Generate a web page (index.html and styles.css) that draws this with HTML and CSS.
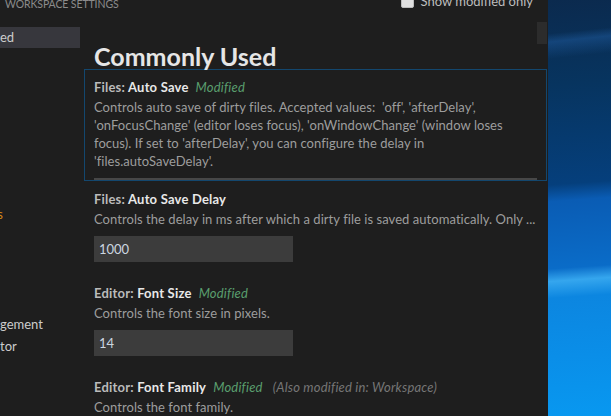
FILE: index.html
```html
<!DOCTYPE html>
<html lang="en">
<head>
<meta charset="utf-8">
<title>Workspace Settings</title>
<link rel="stylesheet" href="styles.css">
</head>
<body>
<div class="window">
  <header class="topbar">
    <span class="scope">WORKSPACE SETTINGS</span>
    <label class="filter"><span class="checkbox"></span>Show modified only</label>
  </header>
  <div class="panes">
    <nav class="tree">
      <div class="tree-item selected">ed</div>
      <div class="tree-item"></div>
      <div class="tree-item"></div>
      <div class="tree-item"></div>
      <div class="tree-item"></div>
      <div class="tree-item"></div>
      <div class="tree-item"></div>
      <div class="tree-item"></div>
      <div class="tree-item"><span class="clip">s</span></div>
      <div class="tree-item"></div>
      <div class="tree-item"></div>
      <div class="tree-item"></div>
      <div class="tree-item"></div>
      <div class="tree-item">gement</div>
      <div class="tree-item">tor</div>
    </nav>
    <main class="editor">
      <div class="vscroll"></div>
      <h1 class="group-title">Commonly Used</h1>

      <section class="setting focused">
        <div class="setting-title"><span class="cat">Files: </span><span class="key">Auto Save</span><span class="modified">Modified</span></div>
        <div class="desc">Controls auto save of dirty files. Accepted values:&nbsp; 'off', 'afterDelay',<br>'onFocusChange' (editor loses focus), 'onWindowChange' (window loses<br>focus). If set to 'afterDelay', you can configure the delay in<br>'files.autoSaveDelay'.</div>
        <div class="hscroll"></div>
      </section>

      <section class="setting">
        <div class="setting-title"><span class="cat">Files: </span><span class="key">Auto Save Delay</span></div>
        <div class="desc single">Controls the delay in ms after which a dirty file is saved automatically. Only ...</div>
        <div class="input">1000</div>
      </section>

      <section class="setting">
        <div class="setting-title"><span class="cat">Editor: </span><span class="key">Font Size</span><span class="modified">Modified</span></div>
        <div class="desc">Controls the font size in pixels.</div>
        <div class="input">14</div>
      </section>

      <section class="setting">
        <div class="setting-title"><span class="cat">Editor: </span><span class="key">Font Family</span><span class="modified">Modified</span><span class="also">(Also modified in: Workspace)</span></div>
        <div class="desc">Controls the font family.</div>
      </section>
    </main>
  </div>
</div>
<div class="desktop"></div>
</body>
</html>
```

FILE: styles.css
```css
html, body {
  margin: 0;
  height: 100%;
  overflow: hidden;
}
body {
  display: flex;
  background: #1e1e1e;
  font-family: "Lato", "Open Sans", sans-serif;
  font-size: 13px;
  color: #cccccc;
}
.window {
  width: 548px;
  flex: none;
  background: #1e1e1e;
  margin-top: -10px;
  display: flex;
  flex-direction: column;
  overflow: hidden;
}
.topbar {
  height: 22px;
  flex: none;
  display: flex;
  align-items: center;
  justify-content: space-between;
  padding: 0 15px 0 5px;
}
.scope {
  font-size: 10.5px;
  color: #8b8b8b;
  letter-spacing: -0.1px;
  margin-top: 5px;
}
.filter {
  display: flex;
  align-items: center;
  gap: 6px;
  color: #bdbdbd;
  font-size: 13px;
}
.checkbox {
  width: 11px;
  height: 11px;
  background: #e0e0e0;
  border: 1px solid #bcbcbc;
  border-radius: 2px;
}
.panes {
  display: flex;
  flex: 1;
  min-height: 0;
}
.tree {
  width: 80px;
  flex: none;
  padding-top: 15px;
}
.tree-item {
  height: 22px;
  line-height: 22px;
  white-space: nowrap;
  overflow: hidden;
  color: #cccccc;
}
.tree-item.selected {
  background: #37373d;
  height: 21px;
  line-height: 21px;
  margin-bottom: 1px;
}
.clip {
  display: inline-block;
  width: 3px;
  overflow: hidden;
  direction: rtl;
  color: #d18616;
  vertical-align: top;
}
.editor {
  flex: 1;
  min-width: 0;
  position: relative;
  padding-right: 1px;
}
.vscroll {
  position: absolute;
  right: 1px;
  top: 10px;
  width: 10px;
  height: 22px;
  background: #2c2c2c;
}
.group-title {
  margin: 0 0 0 14px;
  padding-top: 31px;
  height: 26px;
  line-height: 26px;
  font-size: 25px;
  font-weight: 700;
  color: #e6e6e6;
}
.setting {
  margin-left: 4px;
  border: 1px solid transparent;
  padding: 8px 9px 12px;
}
.setting.focused {
  border-color: #13476e;
  padding-bottom: 0;
}
.setting-title {
  line-height: 18px;
  font-weight: 700;
  white-space: nowrap;
  letter-spacing: 0.2px;
}
.cat {
  color: #bbbbbb;
}
.key {
  color: #e8e8e8;
}
.modified {
  font-weight: 400;
  font-style: italic;
  color: #5a9f6e;
  margin-left: 7px;
}
.also {
  font-weight: 400;
  font-style: italic;
  color: #767676;
  margin-left: 10px;
}
.desc {
  margin-top: 2px;
  line-height: 18px;
  color: #9d9d9d;
  white-space: nowrap;
  overflow: hidden;
  letter-spacing: 0.05px;
}
.hscroll {
  margin-top: 8px;
  height: 2px;
  background: #474747;
}
.input {
  margin-top: 8px;
  width: 194px;
  height: 26px;
  line-height: 26px;
  padding-left: 5px;
  background: #3c3c3c;
  color: #ccd6e0;
}
.desktop {
  flex: 1;
  background:
    linear-gradient(174deg, rgba(255,255,255,0) 0 8%, rgba(40,110,190,0.35) 10%, rgba(255,255,255,0) 14%),
    linear-gradient(176deg, #0b2a4e 0%, #07345f 20%, #053f7c 44%, #0a5cb4 48%, #0a6cc8 64%, #35a6ee 67%, #0c86e0 71%, #0a8ee8 85%, #0898f0 100%);
}
```
